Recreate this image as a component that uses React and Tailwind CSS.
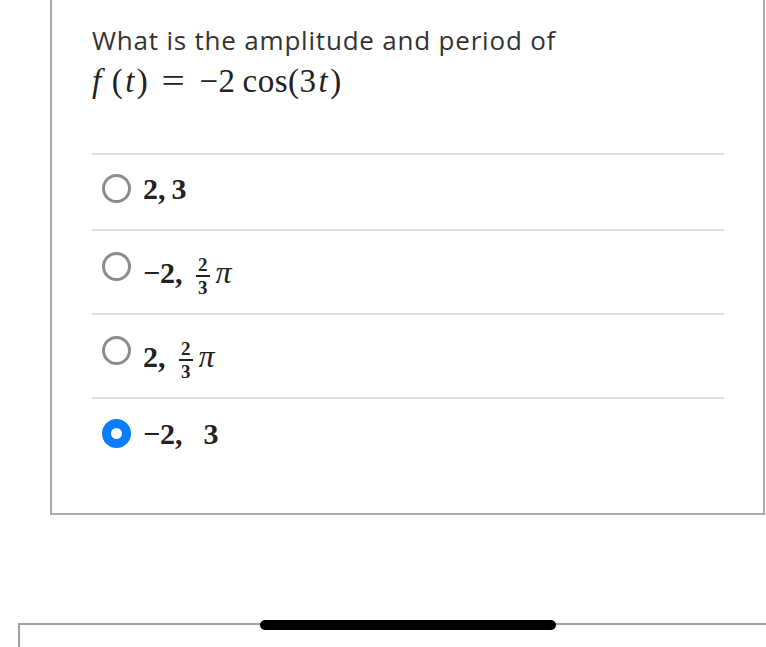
import React from "react";

const serif = { fontFamily: '"Liberation Serif", "DejaVu Serif", serif' };

const Frac = ({ num, den }) => (
  <span className="inline-flex flex-col items-center mx-[6px] text-[19px] leading-[18px] relative top-[4px]">
    <span className="px-[2px] pb-[1px] border-b-2 border-[#222]">{num}</span>
    <span className="pt-[2px]">{den}</span>
  </span>
);

const Radio = ({ checked }) =>
  checked ? (
    <span className="w-[29px] h-[29px] rounded-full border-[9px] border-[#0a7cff] bg-white shrink-0" />
  ) : (
    <span className="w-[29px] h-[29px] rounded-full border-[3px] border-[#8c8c8c] bg-white shrink-0" />
  );

const Option = ({ checked, height, pad, children }) => (
  <div className={`flex items-start gap-[12px] pl-[10px] border-t-2 border-[#e0e0e0] ${height} ${pad}`}>
    <Radio checked={checked} />
    <div className="text-[30px] leading-[29px] font-semibold text-[#222] flex items-center" style={serif}>
      {children}
    </div>
  </div>
);

export default function App() {
  return (
    <div className="relative w-[766px] h-[647px] bg-white overflow-hidden">
      <div className="ml-[50px] w-[715px] h-[515px] border-2 border-t-0 border-[#aaaaaa] pl-[40px] pr-[39px]">
        <div className="pt-[23px] h-[153px]">
          <p
            className="text-[26px] leading-[34px] text-[#333] tracking-[0.8px]"
            style={{ fontFamily: '"Open Sans", Lato, sans-serif' }}
          >
            What is the amplitude and period of
          </p>
          <p className="mt-[6px] text-[33px] leading-[36px] text-[#222] flex items-center tracking-[0.5px]" style={serif}>
            <i>f</i>
            <span className="ml-[10px]">(</span>
            <i className="px-[2px]">t</i>
            <span>)</span>
            <span className="mx-[16px] scale-x-125">=</span>
            <span>−2</span>
            <span className="ml-[7px]">cos(3</span>
            <i className="px-[2px]">t</i>
            <span>)</span>
          </p>
        </div>

        <Option height="h-[76px]" pad="pt-[19px]">
          2,&thinsp;3
        </Option>
        <Option height="h-[84px]" pad="pt-[21px]">
          −2,&nbsp;
          <Frac num="2" den="3" />
          <i className="font-normal text-[32px] pr-[4px]">π</i>
        </Option>
        <Option height="h-[84px]" pad="pt-[21px]">
          2,&nbsp;
          <Frac num="2" den="3" />
          <i className="font-normal text-[32px] pr-[4px]">π</i>
        </Option>
        <Option checked height="h-[116px]" pad="pt-[20px]">
          −2,&nbsp;&nbsp;&thinsp;3
        </Option>
      </div>

      <div className="mt-[108px] ml-[18px] h-[30px] border-t-2 border-l-2 border-[#a0a0a0] flex justify-end items-end">
        <div className="w-[229px] h-[3px] bg-[#c9cdd1] rounded-tl-[3px]" />
      </div>

      <div className="absolute left-[260px] top-[620px] w-[296px] h-[10px] rounded-full bg-black" />
    </div>
  );
}
